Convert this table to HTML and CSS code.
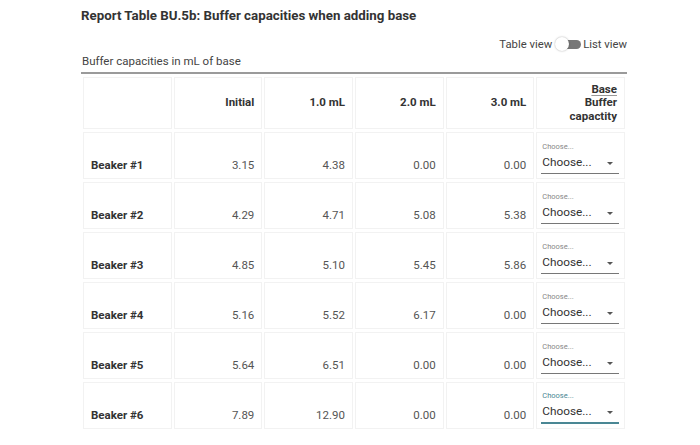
FILE: index.html
```html
<!DOCTYPE html>
<html lang="en">
<head>
<meta charset="utf-8">
<title>Report Table BU.5b</title>
<link rel="stylesheet" href="styles.css">
</head>
<body>
<main class="page">
  <h1 class="title">Report Table BU.5b: Buffer capacities when adding base</h1>
  <div class="toolbar">
    <span class="toggle-label">Table view</span>
    <span class="switch"><span class="track"></span><span class="thumb"></span></span>
    <span class="toggle-label">List view</span>
  </div>
  <div class="caption">Buffer capacities in mL of base</div>
  <table class="grid">
    <thead>
      <tr>
        <th></th>
        <th>Initial</th>
        <th>1.0 mL</th>
        <th>2.0 mL</th>
        <th>3.0 mL</th>
        <th><abbr class="abbr">Base</abbr><br>Buffer<br>capactity</th>
      </tr>
    </thead>
    <tbody>
      <tr>
        <td class="name">Beaker #1</td><td class="num">3.15</td><td class="num">4.38</td><td class="num">0.00</td><td class="num">0.00</td>
        <td class="sel"><div class="field"><span class="flabel">Choose...</span><span class="fvalue">Choose...<span class="caret"></span></span></div></td>
      </tr>
      <tr>
        <td class="name">Beaker #2</td><td class="num">4.29</td><td class="num">4.71</td><td class="num">5.08</td><td class="num">5.38</td>
        <td class="sel"><div class="field"><span class="flabel">Choose...</span><span class="fvalue">Choose...<span class="caret"></span></span></div></td>
      </tr>
      <tr>
        <td class="name">Beaker #3</td><td class="num">4.85</td><td class="num">5.10</td><td class="num">5.45</td><td class="num">5.86</td>
        <td class="sel"><div class="field"><span class="flabel">Choose...</span><span class="fvalue">Choose...<span class="caret"></span></span></div></td>
      </tr>
      <tr>
        <td class="name">Beaker #4</td><td class="num">5.16</td><td class="num">5.52</td><td class="num">6.17</td><td class="num">0.00</td>
        <td class="sel"><div class="field"><span class="flabel">Choose...</span><span class="fvalue">Choose...<span class="caret"></span></span></div></td>
      </tr>
      <tr>
        <td class="name">Beaker #5</td><td class="num">5.64</td><td class="num">6.51</td><td class="num">0.00</td><td class="num">0.00</td>
        <td class="sel"><div class="field"><span class="flabel">Choose...</span><span class="fvalue">Choose...<span class="caret"></span></span></div></td>
      </tr>
      <tr>
        <td class="name">Beaker #6</td><td class="num">7.89</td><td class="num">12.90</td><td class="num">0.00</td><td class="num">0.00</td>
        <td class="sel"><div class="field focused"><span class="flabel">Choose...</span><span class="fvalue">Choose...<span class="caret"></span></span></div></td>
      </tr>
    </tbody>
  </table>
</main>
</body>
</html>
```

FILE: styles.css
```css
* { box-sizing: border-box; }
html, body { margin: 0; padding: 0; background: #fff; }
body {
  font-family: Roboto, "Liberation Sans", sans-serif;
  color: #333;
}
.page {
  width: 546px;
  margin-left: 81px;
  padding-top: 8px;
}
.title {
  margin: 0;
  font-size: 13.3px;
  font-weight: 700;
  line-height: 16px;
  color: #333;
}
.toolbar {
  display: flex;
  justify-content: flex-end;
  align-items: center;
  margin-top: 12px;
  height: 16px;
  font-size: 11.3px;
  color: #444;
}
.switch {
  position: relative;
  width: 26px;
  height: 14px;
  margin: 0 2px 0 3px;
}
.track {
  position: absolute;
  left: 6px;
  top: 3px;
  width: 20px;
  height: 9px;
  border-radius: 5px;
  background: #777;
}
.thumb {
  position: absolute;
  left: 0;
  top: 0;
  width: 14px;
  height: 14px;
  border-radius: 50%;
  background: #fff;
  box-shadow: 0 0 2px rgba(0,0,0,0.35);
}
.caption {
  margin-top: 1px;
  padding: 1px 0 3px 1px;
  font-size: 11.5px;
  line-height: 15px;
  color: #444;
  border-bottom: 2px solid #9a9a9a;
}
.grid {
  width: 546px;
  table-layout: fixed;
  border-collapse: separate;
  border-spacing: 2px 3px;
  margin-top: 0;
  font-size: 11.5px;
}
.grid th,
.grid td {
  border: 1px solid #f2f2f2;
  padding: 0 7px;
  text-align: right;
}
.grid th {
  height: 52px;
  font-weight: 700;
  color: #333;
  line-height: 13.5px;
  vertical-align: middle;
}
.abbr {
  text-decoration: underline;
  text-decoration-color: #999;
  text-underline-offset: 2px;
}
.grid td {
  height: 47px;
  vertical-align: bottom;
  padding-bottom: 6px;
  line-height: 14px;
}
.grid td.name {
  text-align: left;
  font-weight: 700;
  color: #333;
}
.grid td.num {
  color: #555;
}
.grid td.sel {
  text-align: left;
  padding: 0 5px 4px 4px;
}
.field {
  display: flex;
  flex-direction: column;
  border-bottom: 1px solid #777;
}
.flabel {
  font-size: 7.5px;
  line-height: 10px;
  margin-bottom: 2px;
  padding-left: 1px;
  color: #888;
}
.fvalue {
  position: relative;
  font-size: 11.8px;
  line-height: 17px;
  color: #333;
  padding-left: 1px;
  padding-bottom: 2px;
}
.caret {
  position: absolute;
  right: 6px;
  top: 8px;
  width: 0;
  height: 0;
  border-left: 3px solid transparent;
  border-right: 3px solid transparent;
  border-top: 3px solid #555;
}
.field.focused {
  border-bottom: 2px solid #4a8794;
}
.field.focused .flabel {
  color: #4a8794;
}
```
